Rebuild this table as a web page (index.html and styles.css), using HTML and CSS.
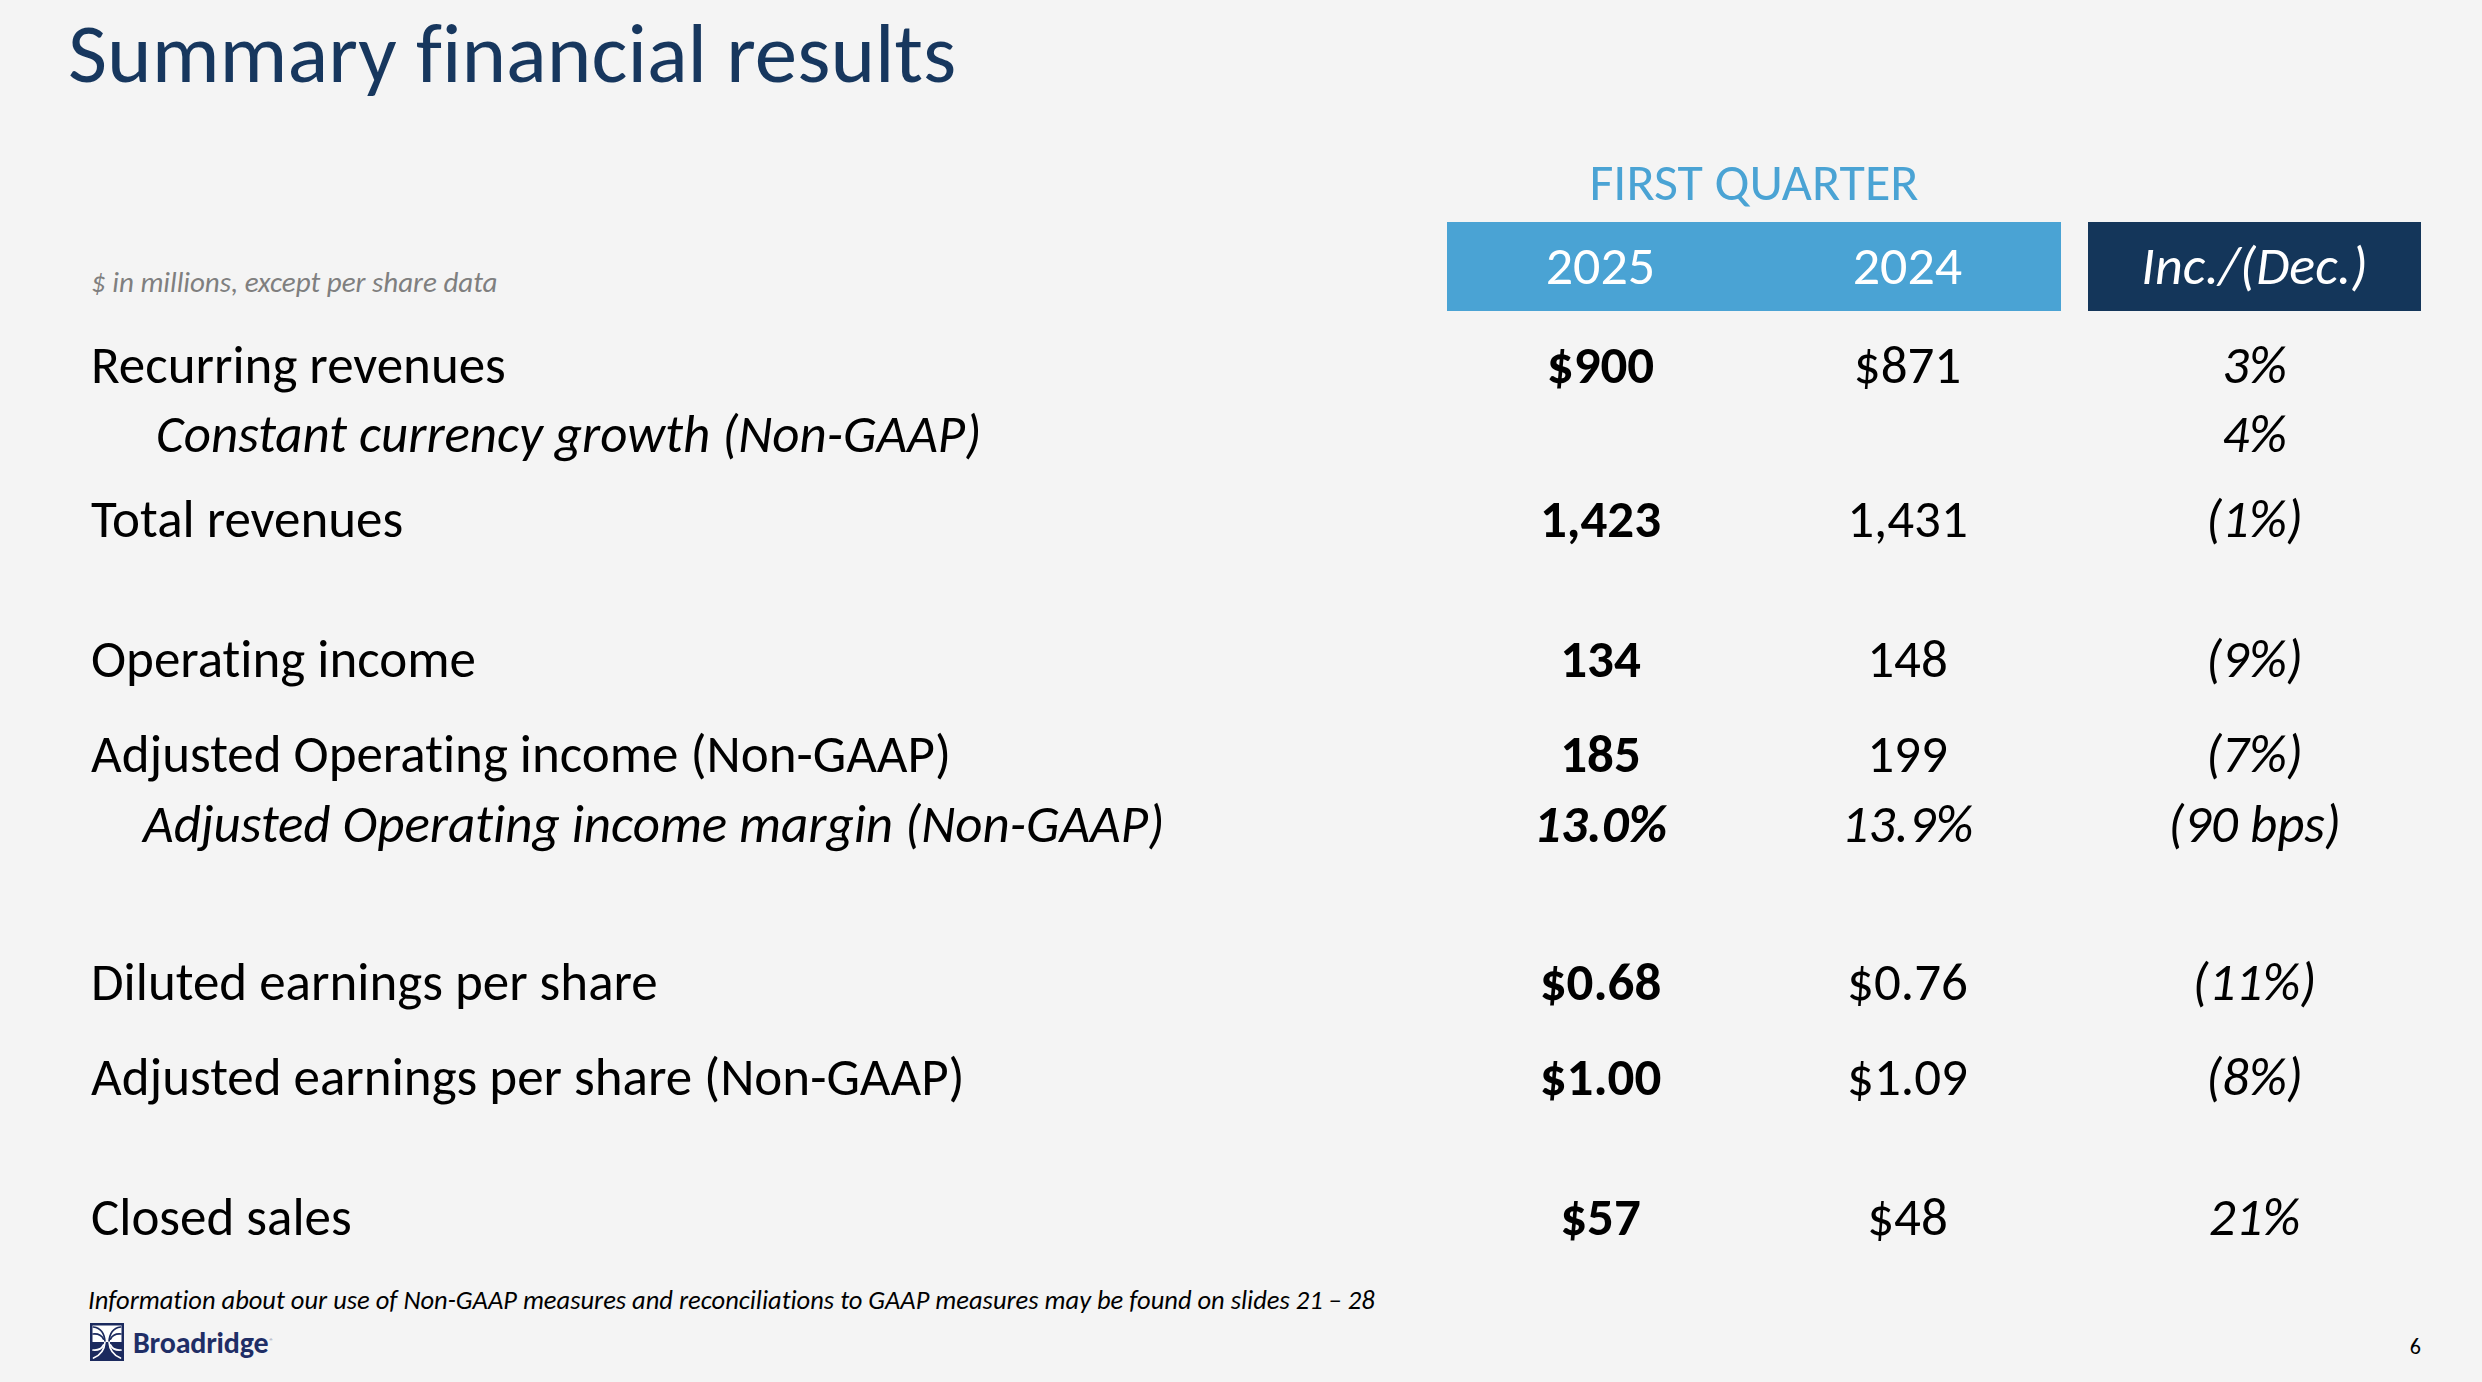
FILE: index.html
```html
<!DOCTYPE html>
<html lang="en">
<head>
<meta charset="utf-8">
<title>Summary financial results</title>
<link rel="stylesheet" href="styles.css">
</head>
<body>
<div class="slide">
  <h1 class="title">Summary financial results</h1>

  <div class="table">
    <div class="row head1">
      <div class="label"></div>
      <div class="fq">FIRST QUARTER</div>
    </div>
    <div class="row head2">
      <div class="label units">$ in millions, except per share data</div>
      <div class="yr">2025</div>
      <div class="yr">2024</div>
      <div class="inc-head">Inc./(Dec.)</div>
    </div>

    <div class="row r1">
      <div class="label">Recurring revenues</div>
      <div class="v cur">$900</div>
      <div class="v prev">$871</div>
      <div class="v chg">3%</div>
    </div>
    <div class="row r2">
      <div class="label sub sub-a">Constant currency growth (Non-GAAP)</div>
      <div class="v cur"></div>
      <div class="v prev"></div>
      <div class="v chg">4%</div>
    </div>
    <div class="row r3">
      <div class="label">Total revenues</div>
      <div class="v cur">1,423</div>
      <div class="v prev">1,431</div>
      <div class="v chg">(1%)</div>
    </div>
    <div class="row r4">
      <div class="label">Operating income</div>
      <div class="v cur">134</div>
      <div class="v prev">148</div>
      <div class="v chg">(9%)</div>
    </div>
    <div class="row r5">
      <div class="label">Adjusted Operating income (Non-GAAP)</div>
      <div class="v cur">185</div>
      <div class="v prev">199</div>
      <div class="v chg">(7%)</div>
    </div>
    <div class="row r6">
      <div class="label sub sub-b">Adjusted Operating income margin (Non-GAAP)</div>
      <div class="v cur it">13.0%</div>
      <div class="v prev it">13.9%</div>
      <div class="v chg">(90 bps)</div>
    </div>
    <div class="row r7">
      <div class="label">Diluted earnings per share</div>
      <div class="v cur">$0.68</div>
      <div class="v prev">$0.76</div>
      <div class="v chg">(11%)</div>
    </div>
    <div class="row r8">
      <div class="label">Adjusted earnings per share (Non-GAAP)</div>
      <div class="v cur">$1.00</div>
      <div class="v prev">$1.09</div>
      <div class="v chg">(8%)</div>
    </div>
    <div class="row r9">
      <div class="label">Closed sales</div>
      <div class="v cur">$57</div>
      <div class="v prev">$48</div>
      <div class="v chg">21%</div>
    </div>
  </div>

  <p class="footnote">Information about our use of Non-GAAP measures and reconciliations to GAAP measures may be found on slides 21 – 28</p>

  <div class="footer">
    <div class="logo">
      <svg class="logo-mark" viewBox="0 0 34 38" width="34" height="38" aria-hidden="true">
        <rect width="34" height="38" fill="#1b2a5e"/>
        <rect x="2.5" y="2.5" width="29" height="16.5" fill="#ffffff"/>
        <g fill="none" stroke="#1b2a5e" stroke-width="1.7" stroke-linecap="round">
          <path d="M3.5 4 C 11 5, 14.5 10, 15 19"/>
          <path d="M30.5 4 C 23 5, 19.5 10, 19 19"/>
          <path d="M3 11 C 8 10.5, 11.5 12, 13.5 16"/>
          <path d="M31 11 C 26 10.5, 22.5 12, 20.5 16"/>
        </g>
        <g fill="none" stroke="#ffffff" stroke-width="1.7" stroke-linecap="round">
          <path d="M15 19 C 14.5 27, 11 32, 3.5 35"/>
          <path d="M19 19 C 19.5 27, 23 32, 30.5 35"/>
          <path d="M13.5 22 C 11.5 26, 8 27.5, 3 27"/>
          <path d="M20.5 22 C 22.5 26, 26 27.5, 31 27"/>
        </g>
      </svg>
      <span class="logo-text">Broadridge</span><span class="reg">®</span>
    </div>
    <div class="pnum">6</div>
  </div>
</div>
</body>
</html>
```

FILE: styles.css
```css
html, body {
  margin: 0;
  padding: 0;
  background: #f4f4f4;
}

.slide {
  width: 2482px;
  height: 1382px;
  background: #f4f4f4;
  font-family: Carlito, Lato, "Liberation Sans", sans-serif;
  font-variant-ligatures: no-common-ligatures;
  color: #000;
  overflow: hidden;
}

.title {
  margin: 0;
  padding: 3px 0 0 68px;
  font-size: 85px;
  line-height: 100px;
  font-weight: normal;
  color: #17375e;
}

.table {
  margin-top: 49px;
  padding-left: 89px;
}

.row {
  display: grid;
  grid-template-columns: 1358px 307px 307px 360px;
  height: 66px;
  line-height: 66px;
  font-size: 53px;
  white-space: nowrap;
}

.head1 {
  height: 60px;
  line-height: 60px;
}

.fq {
  grid-column: 2 / span 2;
  text-align: center;
  font-size: 52px;
  color: #4aa3d4;
}

.head2 {
  margin-top: 10px;
  height: 89px;
  line-height: 89px;
}

.units {
  align-self: end;
  font-size: 29px;
  line-height: 30px;
  padding-bottom: 14px;
  font-style: italic;
  color: #7f7f7f;
}

.yr {
  background: #4aa3d4;
  color: #fff;
  text-align: center;
  font-size: 54px;
}

.inc-head {
  margin-left: 27px;
  background: #14365a;
  color: #fff;
  text-align: center;
  font-style: italic;
  font-size: 54px;
}

.label {
  padding-left: 2px;
}

.sub {
  font-style: italic;
}

.sub-a {
  padding-left: 67px;
}

.sub-b {
  padding-left: 54px;
}

.v {
  text-align: center;
}

.cur {
  font-weight: bold;
}

.it {
  font-style: italic;
}

.chg {
  margin-left: 27px;
  font-style: italic;
}

.r1 { margin-top: 21px; }
.r2 { margin-top: 3px; }
.r3 { margin-top: 19px; }
.r4 { margin-top: 74px; }
.r5 { margin-top: 29px; }
.r6 { margin-top: 4px; }
.r7 { margin-top: 92px; }
.r8 { margin-top: 29px; }
.r9 { margin-top: 74px; }

.footnote {
  margin: 35px 0 0 0;
  padding-left: 88px;
  font-size: 26.5px;
  line-height: 30px;
  font-style: italic;
}

.footer {
  height: 50px;
  display: flex;
  align-items: center;
  justify-content: space-between;
  padding: 0 61px 0 90px;
  margin-top: 2px;
}

.logo {
  display: flex;
  align-items: center;
}

.logo-mark {
  display: block;
}

.logo-text {
  margin-left: 9px;
  font-size: 30px;
  font-weight: bold;
  color: #1f2e66;
  letter-spacing: -0.2px;
}

.reg {
  align-self: flex-start;
  margin-top: 12px;
  margin-left: 1px;
  font-size: 9px;
  color: #8a8fa8;
}

.pnum {
  font-size: 22px;
  color: #000;
  padding-top: 8px;
}
```
